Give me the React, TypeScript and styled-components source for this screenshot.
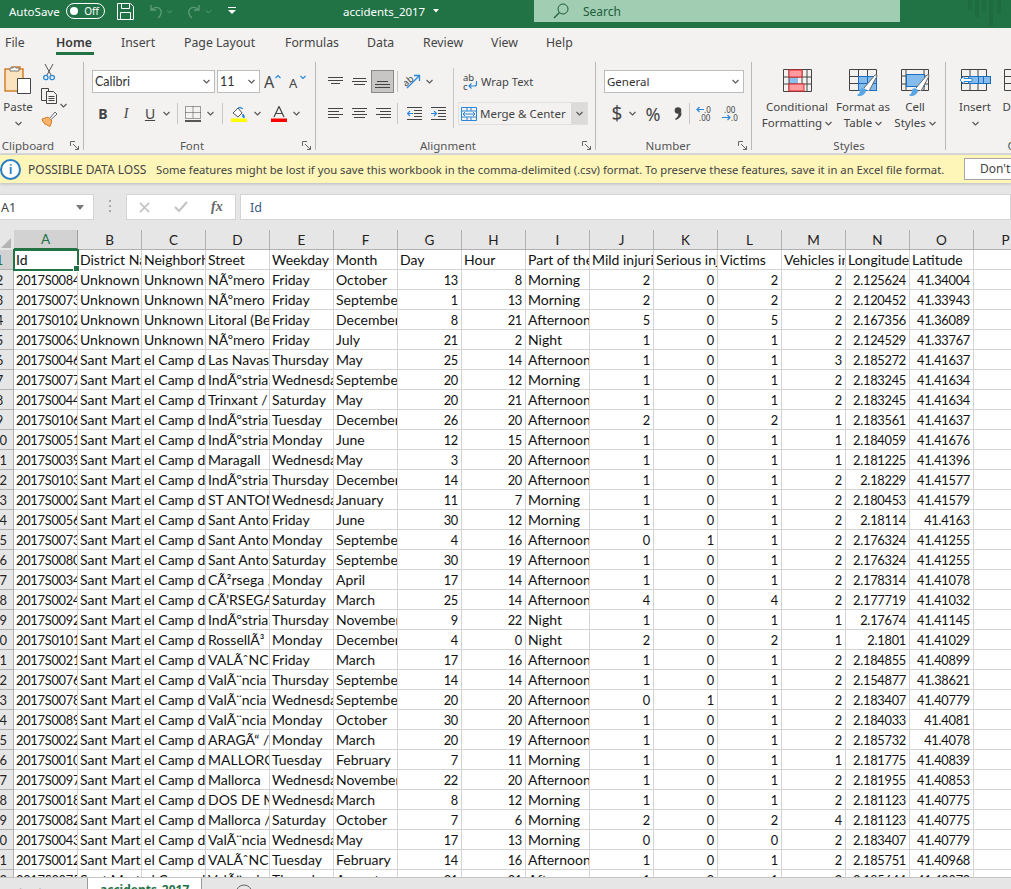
import React from "react";
import styled, { createGlobalStyle } from "styled-components";

const Global = createGlobalStyle`
  html, body { margin: 0; padding: 0; background: #fff; }
  #root { width: 1011px; height: 889px; overflow: hidden; }
`;

const UI = `"Noto Sans", "Open Sans", sans-serif`;
const CELL = `Lato, "Liberation Sans", sans-serif`;

const Page = styled.div`
  width: 1011px; height: 889px; overflow: hidden; display: flex; flex-direction: column;
  font-family: ${UI}; font-size: 12px; color: #444; background: #f3f2f1;
`;
const TitleBar = styled.div`
  height: 28px; flex: none; display: flex; align-items: flex-start; background: #217346; color: #fff;
`;
const TitleItem = styled.div<{ $w: number; $pl?: number; $gap?: number }>`
  width: ${p => p.$w}px; height: 22px; flex: none; display: flex; align-items: center; white-space: nowrap; box-sizing: border-box;
  padding-left: ${p => p.$pl || 0}px; gap: ${p => p.$gap || 0}px; font-size: 11.5px; color: #fff;
`;
const Toggle = styled.div`
  width: 29px; height: 14px; border: 1px solid #fff; border-radius: 8px; display: flex; align-items: center;
  padding: 0 5px 0 3px; box-sizing: content-box; justify-content: space-between; font-size: 10px;
`;
const Knob = styled.span` width: 8px; height: 8px; border-radius: 50%; background: #fff; `;
const SearchBox = styled.div`
  width: 366px; height: 22px; flex: none; background: #a1cdb3; color: #1d5d3a; display: flex; align-items: center; gap: 14px;
  padding-left: 19px; box-sizing: border-box; font-size: 12px;
`;
const Stripes = styled.svg` margin-left: 68px; flex: none; `;

const TabsRow = styled.div` height: 28px; flex: none; display: flex; padding-left: 5px; background: #f3f2f1; `;
const Tab = styled.div<{ $w: number; $active?: boolean }>`
  width: ${p => p.$w}px; flex: none; display: flex; align-items: flex-start; padding-top: 6px; box-sizing: border-box;
  font-size: 12.3px; line-height: 17px; color: #444; position: relative; white-space: nowrap;
  font-weight: ${p => (p.$active ? 600 : 400)};
  ${p => p.$active ? `color: #3b3a39; &::after { content: ""; position: absolute; left: 0; top: 24px; width: 38px; height: 3px; background: #217346; }` : ""}
`;

const Ribbon = styled.div`
  height: 97px; flex: none; display: flex; background: #f3f2f1; border-bottom: 2px solid #d9d9d9; box-sizing: content-box; overflow: hidden;
`;
const Group = styled.div<{ $w: number; $line?: boolean }>`
  width: ${p => p.$w}px; flex: none; position: relative; display: flex; flex-direction: column; box-sizing: border-box;
  ${p => p.$line ? `&::after { content: ""; position: absolute; right: 0; top: 6px; bottom: 3px; width: 1px; background: #b9b9b9; }` : ""}
`;
const GroupBody = styled.div` height: 82px; flex: none; display: flex; `;
const GroupLabel = styled.div<{ $pad?: number }>`
  height: 14px; display: flex; align-items: center; justify-content: center; position: relative; font-size: 11.5px; color: #555;
  padding-right: ${p => p.$pad || 0}px; white-space: nowrap;
`;
const Launcher = styled.svg` position: absolute; right: 4px; top: 3px; `;
const Col = styled.div<{ $ml?: number }>` display: flex; flex-direction: column; gap: 9px; padding-top: 14px; margin-left: ${p => p.$ml || 0}px; `;
const Row = styled.div<{ $pl?: number }>` display: flex; align-items: center; height: 23px; padding-left: ${p => p.$pl || 0}px; `;
const Slot = styled.div<{ $w: number; $ml?: number; $active?: boolean }>`
  width: ${p => p.$w}px; height: 23px; flex: none; margin-left: ${p => p.$ml || 0}px; display: flex; align-items: center; justify-content: center;
  color: #444; box-sizing: border-box;
  ${p => p.$active ? `background: #c8c6c4; border: 1px solid #8a8886;` : ""}
`;
const Letter = styled.span<{ $bold?: boolean; $italic?: boolean; $under?: boolean }>`
  font-size: 14px; line-height: 1; color: #444;
  font-family: ${p => (p.$italic ? `"Liberation Serif", serif` : UI)};
  font-weight: ${p => (p.$bold ? 700 : 400)}; font-style: ${p => (p.$italic ? "italic" : "normal")};
  text-decoration: ${p => (p.$under ? "underline" : "none")};
`;
const Symbol = styled.span<{ $size: number }>` font-size: ${p => p.$size}px; color: #444; line-height: 1; `;
const Sep = styled.div<{ $ml?: number; $mt?: number; $h?: number }>`
  width: 1px; height: ${p => p.$h || 21}px; background: #c8c6c4; flex: none; margin-left: ${p => p.$ml || 0}px; margin-top: ${p => p.$mt || 0}px;
`;
const Combo = styled.div<{ $w: number; $ml?: number }>`
  width: ${p => p.$w}px; height: 23px; flex: none; margin-left: ${p => p.$ml || 0}px; background: #fff; border: 1px solid #bdbdbd; box-sizing: border-box;
  display: flex; align-items: center; justify-content: space-between; padding: 0 4px 0 2px; font-size: 11.5px; color: #333;
`;
const ComboCalibri = styled(Combo)` font-family: ${CELL}; font-size: 12.5px; `;
const WrapText = styled.div`
  display: flex; align-items: center; height: 23px; margin-left: 5px; gap: 3px; font-size: 11.2px; color: #444; white-space: nowrap;
`;
const Merge = styled.div`
  width: 130px; height: 23px; display: flex; align-items: center; background: #f3f2f1; border: 1px solid #e1dfdd; box-sizing: border-box; font-size: 11.5px; color: #444; white-space: nowrap; gap: 3px; padding-left: 2px;
`;
const MergeDrop = styled.div`
  margin-left: auto; width: 16px; height: 21px; display: flex; align-items: center; justify-content: center; background: #dcdbda;
`;
const Big = styled.div<{ $w: number; $ml?: number; $pt?: number }>`
  width: ${p => p.$w}px; flex: none; margin-left: ${p => p.$ml || 0}px; display: flex; flex-direction: column; align-items: center;
  padding-top: ${p => p.$pt ?? 13}px; font-size: 11.5px; line-height: 16px; color: #444; white-space: nowrap; text-align: center;
`;
const BigIcon = styled.div<{ $pl?: number }>` height: 30px; display: flex; align-items: flex-start; justify-content: center; padding-left: ${p => p.$pl || 0}px; `;
const BigLine = styled.div<{ $mt?: number }>` height: 16px; display: flex; align-items: center; gap: 3px; margin-top: ${p => p.$mt || 0}px; `;
const SmallCol = styled.div<{ $ml?: number }>` display: flex; flex-direction: column; align-items: center; width: 20px; padding-top: 8px; gap: 7px; margin-left: ${p => p.$ml || 0}px; `;
const SmallChev = styled.div` width: 7px; padding-top: 39px; margin-left: 1px; `;

const MsgBar = styled.div`
  height: 28px; flex: none; display: flex; align-items: center; background: #fdf6b8; box-shadow: 0 1px 3px rgba(0,0,0,.2); position: relative; white-space: nowrap;
  color: #444; overflow: hidden;
`;
const MsgIcon = styled.div`
  width: 17px; height: 17px; border: 2px solid #2a7cc4; border-radius: 50%; background: #fff; color: #2a7cc4; display: flex; align-items: center; justify-content: center;
  font-size: 13px; font-weight: 600; flex: none;
`;
const MsgTitle = styled.span` margin-left: 7px; width: 128px; flex: none; font-size: 12px; `;
const MsgText = styled.span` width: 808px; flex: none; font-size: 11.25px; `;
const MsgButton = styled.div`
  width: 60px; height: 22px; flex: none; background: #fff; border: 1px solid #a6a6a6; box-sizing: border-box; padding-left: 15px; line-height: 20px; font-size: 12px;
`;

const FormulaBar = styled.div`
  height: 47px; flex: none; background: #e6e6e6; display: flex; align-items: flex-start; padding-top: 11px; box-sizing: border-box;
`;
const NameBox = styled.div`
  width: 95px; height: 26px; flex: none; background: #fff; border: 1px solid #d4d4d4; box-sizing: border-box; margin-left: -1px;
  display: flex; align-items: center; justify-content: space-between; padding: 0 9px 0 1px; font-size: 12.5px; color: #444;
`;
const Grip = styled.svg` margin-left: 15px; margin-right: 14px; margin-top: 5px; flex: none; `;
const FxBox = styled.div`
  width: 110px; height: 26px; flex: none; background: #fff; border: 1px solid #d4d4d4; box-sizing: border-box; display: flex; align-items: center;
  padding-left: 12px; gap: 24px;
`;
const FxGlyph = styled.span` font-family: "Liberation Serif", serif; font-style: italic; font-weight: 700; font-size: 14px; color: #666; margin-left: -1px; `;
const FormulaInput = styled.div`
  flex: 1; height: 26px; margin-left: 4px; background: #fff; border: 1px solid #d4d4d4; box-sizing: border-box; display: flex; align-items: center; padding-left: 9px;
  font-size: 12.5px; color: #3c5a8a;
`;

const Sheet = styled.div` flex: 1; min-height: 0; overflow: hidden; background: #fff; position: relative; `;
const HeadRow = styled.div` height: 20px; display: flex; background: #e6e6e6; margin-left: -14px; `;
const Corner = styled.div`
  width: 28px; height: 20px; flex: none; display: flex; justify-content: flex-end; align-items: flex-end; padding: 0 3px 2px 0; box-sizing: border-box; background: #e6e6e6;
`;
const ColHead = styled.div<{ $on?: boolean }>`
  width: 64px; height: 20px; flex: none; box-sizing: border-box; border-right: 1px solid ${p => (p.$on ? "#9f9f9f" : "#b1b1b1")};
  display: flex; align-items: center; justify-content: center; font-family: ${CELL}; font-size: 13.5px;
  background: ${p => (p.$on ? "#d2d2d2" : "#e6e6e6")}; color: ${p => (p.$on ? "#217346" : "#222")};
  border-bottom: ${p => (p.$on ? "2px solid #217346" : "1px solid #b1b1b1")};
`;
const DataRow = styled.div` height: 20px; display: flex; margin-left: -14px; `;
const RowHead = styled.div<{ $on?: boolean }>`
  width: 28px; height: 20px; flex: none; box-sizing: border-box; background: ${p => (p.$on ? "#d2d2d2" : "#e6e6e6")};
  color: ${p => (p.$on ? "#217346" : "#222")}; border-bottom: 1px solid #b1b1b1; border-right: 1px solid #b1b1b1;
  display: flex; align-items: center; justify-content: center; font-family: ${CELL}; font-size: 12.9px;
`;
const Cell = styled.div<{ $num?: boolean; $digits?: boolean }>`
  width: 64px; height: 20px; flex: none; box-sizing: border-box; border-right: 1px solid #d4d4d4; border-bottom: 1px solid #d4d4d4;
  font-family: ${CELL}; font-size: ${p => (p.$digits ? 12.8 : 14)}px; letter-spacing: ${p => (p.$digits ? -0.25 : 0)}px; line-height: 20px; color: #111; white-space: nowrap; overflow: hidden;
  padding: 0 ${p => (p.$num ? 3 : 0)}px 0 ${p => (p.$num ? 0 : 2)}px; text-align: ${p => (p.$num ? "right" : "left")};
`;
const Selection = styled.div`
  position: absolute; left: 13px; top: 19px; width: 66px; height: 22px; border: 2px solid #217346; box-sizing: border-box; pointer-events: none;
  &::after { content: ""; position: absolute; right: -3px; bottom: -3px; width: 5px; height: 5px; background: #217346; border: 1px solid #fff; box-sizing: content-box; }
`;
const SheetTabs = styled.div` height: 12px; flex: none; display: flex; background: #e6e6e6; overflow: hidden; border-top: 1px solid #c4c4c4; box-sizing: border-box; `;
const Nav = styled.div` width: 88px; flex: none; display: flex; padding: 5px 0 0 18px; gap: 17px; color: #aaa; font-size: 12px; line-height: 14px; border-right: 1px solid #9a9a9a; box-sizing: border-box; `;
const SheetTab = styled.div`
  width: 114px; flex: none; background: #fff; color: #217346; font-weight: 700; font-size: 12px; line-height: 15px; padding: 5px 0 0 12px; box-sizing: border-box; margin-top: -1px; border-right: 1px solid #9a9a9a; white-space: nowrap;
`;
const AddSheet = styled.svg` margin-left: 33px; margin-top: 6px; flex: none; `;

const Chev = ({ c = "#555" }: { c?: string }) => (
  <svg width="7" height="5" viewBox="0 0 7 5"><path d="M.5 1 3.500 4 6.500 1" fill="none" stroke={c} strokeWidth="1.1" /></svg>
);
const Launch = () => (
  <Launcher width="10" height="10" viewBox="0 0 10 10" fill="none" stroke="#666">
    <path d="M.5 5V.5H5M3 3l5.500 5.500M5 8.500h3.500V5" />
  </Launcher>
);
const lines = (ys: [number, number, number][], w = 15) => (
  <svg width={w} height="14" viewBox={`0 0 ${w} 14`} stroke="#444">{ys.map(([y, a, b], i) => <path key={i} d={`M${a} ${y + .5}H${b}`} />)}</svg>
);

const PasteIcon = () => (
  <svg width="28" height="30" viewBox="0 0 28 30">
    <path d="M1 4h7v-2h8v2h3v22H1z" fill="#fbe3c0" stroke="#d4812a" strokeWidth="1.5" />
    <path d="M6 5V3h3q1-3 3 0h3v3H6z" fill="#fff" stroke="#777" />
    <path d="M13.500 13.500h13v15h-13z" fill="#fff" stroke="#444" />
  </svg>
);
const CutIcon = () => (
  <svg width="12" height="17" viewBox="0 0 12 17" fill="none">
    <path d="M2 0l6 11M10 0L4 11" stroke="#555" />
    <circle cx="2.800" cy="13.500" r="2.200" stroke="#2b88d8" strokeWidth="1.300" /><circle cx="9.200" cy="13.500" r="2.200" stroke="#2b88d8" strokeWidth="1.300" />
  </svg>
);
const CopyIcon = () => (
  <svg width="17" height="16" viewBox="0 0 17 16" fill="#f3f2f1" stroke="#444">
    <path d="M.5.500h7v12h-7z" /><path d="M5.500 3.500h7l3 3v9h-10z" /><path d="M7.500 8.500h6M7.500 10.500h6M7.500 12.500h6" />
  </svg>
);
const PainterIcon = () => (
  <svg width="17" height="16" viewBox="0 0 17 16">
    <path d="M1 8l6-2 4 4-2 5.500-3-1.500-1-1-1 .5-1-2-1-.5z" fill="#f8b26a" stroke="#d4812a" />
    <path d="M9 7l5-6 2 2-6 5.500" fill="#fff" stroke="#666" />
  </svg>
);
const GrowA = ({ up }: { up: boolean }) => (
  <svg width="18" height="16" viewBox="0 0 18 16">
    <text x="0" y="14" fontFamily="Noto Sans, sans-serif" fontSize={up ? 16 : 13} fill="#444">A</text>
    <path d={up ? "M11.500 4 14 1.500 16.500 4" : "M11.500 2 14 4.500 16.500 2"} fill="none" stroke="#2b88d8" strokeWidth="1.200" />
  </svg>
);
const BorderIcon = () => (
  <svg width="16" height="16" viewBox="0 0 16 16" fill="none" stroke="#444" strokeDasharray="1 1">
    <path d="M.5.500h15v12H.5zM8 .5v12M.5 6.500h15" /><path d="M0 15h16" strokeDasharray="none" strokeWidth="1.500" stroke="#222" />
  </svg>
);
const FillIcon = () => (
  <svg width="17" height="16" viewBox="0 0 17 16">
    <path d="M2 7l5-5 4 5-4 4z" fill="#fff" stroke="#555" /><path d="M12 8q2 2 1 4-2 0-1-4M7 2q2-2 5 1" fill="#2b88d8" stroke="#2b88d8" />
    <rect x="0" y="12.500" width="16" height="3.500" fill="#ffff00" />
  </svg>
);
const FontColor = () => (
  <svg width="16" height="16" viewBox="0 0 16 16">
    <path d="M3 11 8 .5 13 11M5 7.500h6" fill="none" stroke="#444" strokeWidth="1.200" /><rect y="12.500" width="16" height="3.500" fill="#ff0000" />
  </svg>
);
const Orient = () => (
  <svg width="18" height="17" viewBox="0 0 18 17">
    <text x="0" y="11" fontFamily="Noto Sans, sans-serif" fontSize="9.500" fill="#444" transform="rotate(-40 5 10)">ab</text>
    <path d="M3 15 15 3M10 2.500h5.500V8" fill="none" stroke="#2b88d8" strokeWidth="1.300" />
  </svg>
);
const WrapIcon = () => (
  <svg width="15" height="17" viewBox="0 0 15 17">
    <text x="0" y="8" fontFamily="Noto Sans, sans-serif" fontSize="9.500" fill="#444">ab</text>
    <text x="0" y="16.500" fontFamily="Noto Sans, sans-serif" fontSize="9.500" fill="#444">c</text>
    <path d="M13.500 8v3q0 2-2 2H6M8.500 10.500 6 13l2.500 2.500" fill="none" stroke="#2b88d8" strokeWidth="1.200" />
  </svg>
);
const MergeIcon = () => (
  <svg width="16" height="16" viewBox="0 0 16 16" fill="none">
    <path d="M.5 1.500h15v13H.5zM.5 5h15M.5 11h15M6 1.500V5M10 1.500V5M6 11v3.500M10 11v3.500" stroke="#2b88d8" />
    <path d="M2 8h12M4 6l-2 2 2 2M12 6l2 2-2 2" stroke="#2b88d8" />
  </svg>
);
const Indent = ({ out }: { out: boolean }) => (
  <svg width="15" height="14" viewBox="0 0 15 14" stroke="#444">
    <path d="M0 .5h15M7 3.500h8M7 6.500h8M7 9.500h8M0 12.500h15" />
    <path d={out ? "M0 6.500h6M3 4 .5 6.500 3 9" : "M0 6.500h5.500M3 4 5.500 6.500 3 9"} fill="none" stroke="#2b88d8" strokeWidth="1.200" />
  </svg>
);
const Comma = () => (
  <svg width="8" height="13" viewBox="0 0 8 13" fill="#444"><circle cx="4" cy="3.500" r="3.300" /><path d="M4.500 5.500h3Q8 10 2 13l-1-1q3.500-2 3.500-6.500z" /></svg>
);
const DecIcon = ({ inc }: { inc: boolean }) => (
  <svg width="18" height="15" viewBox="0 0 18 15">
    <text x={inc ? 8 : 3} y="6.500" fontFamily="Noto Sans, sans-serif" fontSize="8" fill="#444">{inc ? ".0" : ".00"}</text>
    <text x={inc ? 3 : 10} y="14.500" fontFamily="Noto Sans, sans-serif" fontSize="8" fill="#444">{inc ? ".00" : ".0"}</text>
    <path d={inc ? "M8 3.500H1M3.500 1 1 3.500 3.500 6" : "M1 11.500h8M6.500 9 9 11.500 6.500 14"} fill="none" stroke="#2b88d8" strokeWidth="1.200" />
  </svg>
);
const Brush = () => (
  <g>
    <path d="M15 19 L26 6 q2-1 2 1 L20 22" fill="#fff" stroke="#666" />
    <path d="M9 27q5 0 6-2 3-2 1-5-4-2-5 1 0 4-3 5z" fill="#5aa5e3" />
  </g>
);
const CFIcon = () => (
  <svg width="29" height="23" viewBox="0 0 29 23" fill="none">
    <rect x="6" y="8" width="9" height="7" fill="#8ebfea" />
    <path d="M.5.500h28v22H.5zM.5 8h28M.5 15h28M6 .5v22M19 .5v22M24 .5v22" stroke="#444" />
    <rect x="6" y="1" width="13" height="7" fill="#ff9ca0" stroke="#e8262a" />
    <rect x="6" y="15" width="15" height="7" fill="#ff9ca0" stroke="#e8262a" />
  </svg>
);
const TableIcon = () => (
  <svg width="31" height="28" viewBox="0 0 31 28" fill="none">
    <path d="M.5.500h27v21H.5zM.5 7.500h27M.5 14.500h27M9.500.5v21M18.500.5v21" stroke="#444" />
    <rect x="9.500" y="7.500" width="18" height="14" fill="#85bcec" stroke="#1b6ec2" />
    <path d="M18.500 7.500v14M9.500 14.500h18" stroke="#1b6ec2" />
    <Brush />
  </svg>
);
const CellStyleIcon = () => (
  <svg width="31" height="28" viewBox="0 0 31 28" fill="none">
    <path d="M.5.500h27v21H.5zM.5 7h27M.5 15h27M5 .5v21M23 .5v21" stroke="#444" />
    <rect x="5.500" y="5.500" width="18" height="12" fill="#85bcec" stroke="#1b6ec2" />
    <Brush />
  </svg>
);
const InsertIcon = () => (
  <svg width="32" height="22" viewBox="0 0 32 22" fill="none">
    <path d="M2.500.5h25v21h-25zM2.500 7.500h25M2.500 14.500h25M11 .5v21M19 .5v21" stroke="#444" />
    <rect x="9.500" y="7.500" width="22" height="7" fill="#85bcec" stroke="#1b6ec2" />
    <path d="M19.500 7.500v7M24.500 7.500v7" stroke="#1b6ec2" />
    <path d="M5 7l-4 4 4 4v-2.500h8v-3H5z" fill="#fff" stroke="#2b88d8" />
  </svg>
);
const DeleteIcon = () => (
  <svg width="32" height="22" viewBox="0 0 32 22" fill="none">
    <path d="M.5.500h25v21H.5zM.5 7.500h25M.5 14.500h25M9 .5v21M17 .5v21" stroke="#444" />
    <rect x="9" y="7.500" width="22" height="7" fill="#85bcec" stroke="#1b6ec2" />
  </svg>
);

const columns = ["A", "B", "C", "D", "E", "F", "G", "H", "I", "J", "K", "L", "M", "N", "O", "P"];
const header = ["Id", "District Name", "Neighborhood Name", "Street", "Weekday", "Month", "Day", "Hour", "Part of the day", "Mild injuries", "Serious injuries", "Victims", "Vehicles involved", "Longitude", "Latitude", ""];
const U = "Unknown", S = "Sant MartÃ­", C = "el Camp de l'Arpa del Clot";
const IND = "IndÃºstria", VAL = "ValÃ¨ncia", VALU = "VALÃˆNCIA", NUM = "NÃºmero", ANT = "Sant Antoni Maria Claret";
const Mon = "Monday", Tue = "Tuesday", Wed = "Wednesday", Thu = "Thursday", Fri = "Friday", Sat = "Saturday";
const Sep9 = "September", Dec = "December", Nov = "November", Feb = "February", Mar = "March";
const A = "Afternoon", M = "Morning", N = "Night";
type R = [string, string, string, string, string, string, number, number, string, number, number, number, number, string, string];
const rows: R[] = [
  ["2017S0084", U, U, NUM, Fri, "October", 13, 8, M, 2, 0, 2, 2, "2.125624", "41.34004"],
  ["2017S0073", U, U, NUM, Fri, Sep9, 1, 13, M, 2, 0, 2, 2, "2.120452", "41.33943"],
  ["2017S0102", U, U, "Litoral (BesÃ²s)", Fri, Dec, 8, 21, A, 5, 0, 5, 2, "2.167356", "41.36089"],
  ["2017S0063", U, U, NUM, Fri, "July", 21, 2, N, 1, 0, 1, 2, "2.124529", "41.33767"],
  ["2017S0046", S, C, "Las Navas de Tolosa", Thu, "May", 25, 14, A, 1, 0, 1, 3, "2.185272", "41.41637"],
  ["2017S0077", S, C, IND, Wed, Sep9, 20, 12, M, 1, 0, 1, 2, "2.183245", "41.41634"],
  ["2017S0044", S, C, "Trinxant / IndÃºstria", Sat, "May", 20, 21, A, 1, 0, 1, 2, "2.183245", "41.41634"],
  ["2017S0106", S, C, IND, Tue, Dec, 26, 20, A, 2, 0, 2, 1, "2.183561", "41.41637"],
  ["2017S0051", S, C, IND, Mon, "June", 12, 15, A, 1, 0, 1, 1, "2.184059", "41.41676"],
  ["2017S0039", S, C, "Maragall", Wed, "May", 3, 20, A, 1, 0, 1, 1, "2.181225", "41.41396"],
  ["2017S0103", S, C, IND, Thu, Dec, 14, 20, A, 1, 0, 1, 2, "2.18229", "41.41577"],
  ["2017S0002", S, C, "ST ANTONI", Wed, "January", 11, 7, M, 1, 0, 1, 2, "2.180453", "41.41579"],
  ["2017S0056", S, C, ANT, Fri, "June", 30, 12, M, 1, 0, 1, 2, "2.18114", "41.4163"],
  ["2017S0073", S, C, ANT, Mon, Sep9, 4, 16, A, 0, 1, 1, 2, "2.176324", "41.41255"],
  ["2017S0080", S, C, ANT, Sat, Sep9, 30, 19, A, 1, 0, 1, 2, "2.176324", "41.41255"],
  ["2017S0034", S, C, "CÃ²rsega / Cartagena", Mon, "April", 17, 14, A, 1, 0, 1, 2, "2.178314", "41.41078"],
  ["2017S0024", S, C, "CÃ’RSEGA", Sat, Mar, 25, 14, A, 4, 0, 4, 2, "2.177719", "41.41032"],
  ["2017S0092", S, C, IND, Thu, Nov, 9, 22, N, 1, 0, 1, 1, "2.17674", "41.41145"],
  ["2017S0101", S, C, "RossellÃ³", Mon, Dec, 4, 0, N, 2, 0, 2, 1, "2.1801", "41.41029"],
  ["2017S0021", S, C, VALU, Fri, Mar, 17, 16, A, 1, 0, 1, 2, "2.184855", "41.40899"],
  ["2017S0076", S, C, VAL, Thu, Sep9, 14, 14, A, 1, 0, 1, 2, "2.154877", "41.38621"],
  ["2017S0078", S, C, VAL, Wed, Sep9, 20, 20, A, 0, 1, 1, 2, "2.183407", "41.40779"],
  ["2017S0089", S, C, VAL, Mon, "October", 30, 20, A, 1, 0, 1, 2, "2.184033", "41.4081"],
  ["2017S0022", S, C, "ARAGÃ“ / Sicilia", Mon, Mar, 20, 19, A, 1, 0, 1, 2, "2.185732", "41.4078"],
  ["2017S0010", S, C, "MALLORCA", Tue, Feb, 7, 11, M, 1, 0, 1, 1, "2.181775", "41.40839"],
  ["2017S0097", S, C, "Mallorca", Wed, Nov, 22, 20, A, 1, 0, 1, 2, "2.181955", "41.40853"],
  ["2017S0018", S, C, "DOS DE MAIG", Wed, Mar, 8, 12, M, 1, 0, 1, 2, "2.181123", "41.40775"],
  ["2017S0082", S, C, "Mallorca / Dos de Maig", Sat, "October", 7, 6, M, 2, 0, 2, 4, "2.181123", "41.40775"],
  ["2017S0043", S, C, VAL, Wed, "May", 17, 13, M, 0, 0, 0, 2, "2.183407", "41.40779"],
  ["2017S0012", S, C, VALU, Tue, Feb, 14, 16, A, 1, 0, 1, 2, "2.185751", "41.40968"],
  ["2017S0075", S, C, VAL, Thu, "August", 31, 21, A, 1, 0, 1, 2, "2.185644", "41.40970"],
];

const tabs: [string, number, boolean?][] = [["File", 51], ["Home", 65, true], ["Insert", 63], ["Page Layout", 101], ["Formulas", 82], ["Data", 56], ["Review", 68], ["View", 55], ["Help", 40]];

export default function App() {
  return (
    <Page>
      <Global />
      <TitleBar>
        <TitleItem $w={66} $pl={9}>AutoSave</TitleItem>
        <TitleItem $w={51}><Toggle><Knob /><span>Off</span></Toggle></TitleItem>
        <TitleItem $w={30}>
          <svg width="17" height="17" viewBox="0 0 17 17" fill="none" stroke="#fff"><path d="M.5.500h13l3 3v13H.5z" /><path d="M4.500.5v5h8v-5M3.500 16.500v-7h10v7" /></svg>
        </TitleItem>
        <TitleItem $w={39}>
          <svg width="26" height="15" viewBox="0 0 26 15" fill="none" stroke="#5d9c79"><path d="M4 1v5h5M4 6q4-4 8-2 4 3 1 8l-2 2" strokeWidth="1.300" /><path d="M20 6.500l2.500 2.500 2.500-2.500" /></svg>
        </TitleItem>
        <TitleItem $w={42}>
          <svg width="26" height="15" viewBox="0 0 26 15" fill="none" stroke="#5d9c79"><path d="M13 1v5H8M13 6q-4-4-8-2-4 3-1 8l2 2" strokeWidth="1.300" /><path d="M20 6.500l2.500 2.500 2.500-2.500" /></svg>
        </TitleItem>
        <TitleItem $w={115}>
          <svg width="8" height="8" viewBox="0 0 8 8" fill="#fff"><path d="M0 0h8v1H0zM0 3h8L4 7z" /></svg>
        </TitleItem>
        <TitleItem $w={191} $gap={8}>accidents_2017
          <svg width="6" height="4" viewBox="0 0 6 4" fill="#fff"><path d="M0 0h6L3 3.500z" /></svg>
        </TitleItem>
        <SearchBox>
          <svg width="16" height="16" viewBox="0 0 16 16" fill="none" stroke="#1d5d3a"><circle cx="10" cy="6" r="5" /><path d="M6.500 9.500 1 15" strokeWidth="1.200" /></svg>
          <span>Search</span>
        </SearchBox>
        <Stripes width="33" height="28" viewBox="0 0 33 28" fill="#1e6a41">
          <rect x="0" width="4" height="10" /><rect x="7" width="4" height="17" /><rect x="14" width="4" height="11" /><rect x="21" width="4" height="26" /><rect x="29" width="4" height="14" />
        </Stripes>
      </TitleBar>

      <TabsRow>
        {tabs.map(([t, w, a]) => <Tab key={t} $w={w} $active={a}>{t}</Tab>)}
      </TabsRow>

      <Ribbon>
        <Group $w={84} $line>
          <GroupBody>
            <Big $w={36} $pt={9}>
              <BigIcon><PasteIcon /></BigIcon>
              <BigLine $mt={4}>Paste</BigLine>
              <BigLine><Chev /></BigLine>
            </Big>
            <SmallCol $ml={3}><CutIcon /><CopyIcon /><PainterIcon /></SmallCol>
            <SmallChev><Chev /></SmallChev>
          </GroupBody>
          <GroupLabel $pad={28}>Clipboard<Launch /></GroupLabel>
        </Group>

        <Group $w={232} $line>
          <GroupBody>
            <Col>
              <Row $pl={8}>
                <ComboCalibri $w={123}>Calibri<Chev /></ComboCalibri>
                <ComboCalibri $w={43} $ml={2}>11<Chev /></ComboCalibri>
                <Slot $w={25}><GrowA up /></Slot>
                <Slot $w={25}><GrowA up={false} /></Slot>
              </Row>
              <Row $pl={11}>
                <Slot $w={16}><Letter $bold>B</Letter></Slot>
                <Slot $w={16} $ml={7}><Letter $italic>I</Letter></Slot>
                <Slot $w={16} $ml={8}><Letter $under>U</Letter></Slot>
                <Slot $w={10} $ml={3}><Chev /></Slot>
                <Sep $ml={6} />
                <Slot $w={16} $ml={7}><BorderIcon /></Slot>
                <Slot $w={10} $ml={4}><Chev /></Slot>
                <Sep $ml={7} />
                <Slot $w={17} $ml={8}><FillIcon /></Slot>
                <Slot $w={10} $ml={4}><Chev /></Slot>
                <Slot $w={16} $ml={9}><FontColor /></Slot>
                <Slot $w={10} $ml={4}><Chev /></Slot>
              </Row>
            </Col>
          </GroupBody>
          <GroupLabel $pad={16}>Font<Launch /></GroupLabel>
        </Group>

        <Group $w={280} $line>
          <GroupBody>
            <Col>
              <Row $pl={7}>
                <Slot $w={24}>{lines([[2, 0, 15], [5, 0, 15], [8, 3, 12]])}</Slot>
                <Slot $w={24}>{lines([[3, 1, 14], [6, 0, 15], [9, 2, 13]])}</Slot>
                <Slot $w={23} $active>{lines([[6, 2, 13], [9, 0, 15], [12, 0, 15]])}</Slot>
                <Sep $ml={3} />
                <Slot $w={20} $ml={5}><Orient /></Slot>
                <Slot $w={10} $ml={1}><Chev /></Slot>
              </Row>
              <Row $pl={7}>
                <Slot $w={24}>{lines([[1, 0, 15], [4, 0, 11], [7, 0, 15], [10, 0, 11]])}</Slot>
                <Slot $w={24}>{lines([[1, 0, 15], [4, 2, 13], [7, 0, 15], [10, 2, 13]])}</Slot>
                <Slot $w={24}>{lines([[1, 0, 15], [4, 4, 15], [7, 0, 15], [10, 4, 15]])}</Slot>
                <Sep $ml={2} />
                <Slot $w={15} $ml={9}><Indent out /></Slot>
                <Slot $w={15} $ml={9}><Indent out={false} /></Slot>
              </Row>
            </Col>
            <Sep $ml={7} $h={60} $mt={12} />
            <Col $ml={4}>
              <WrapText><WrapIcon />Wrap Text</WrapText>
              <Merge><MergeIcon />Merge &amp; Center<MergeDrop><Chev /></MergeDrop></Merge>
            </Col>
          </GroupBody>
          <GroupLabel $pad={16}>Alignment<Launch /></GroupLabel>
        </Group>

        <Group $w={156} $line>
          <GroupBody>
            <Col>
              <Row $pl={8}><Combo $w={140}>General<Chev /></Combo></Row>
              <Row $pl={14}>
                <Slot $w={14}><Symbol $size={19}>$</Symbol></Slot>
                <Slot $w={10} $ml={3}><Chev /></Slot>
                <Slot $w={16} $ml={8}><Symbol $size={18}>%</Symbol></Slot>
                <Slot $w={10} $ml={12}><Comma /></Slot>
                <Sep $ml={6} />
                <Slot $w={18} $ml={6}><DecIcon inc /></Slot>
                <Slot $w={18} $ml={7}><DecIcon inc={false} /></Slot>
              </Row>
            </Col>
          </GroupBody>
          <GroupLabel $pad={12}>Number<Launch /></GroupLabel>
        </Group>

        <Group $w={194} $line>
          <GroupBody>
            <Big $w={78} $ml={6}>
              <BigIcon><CFIcon /></BigIcon>
              <BigLine>Conditional</BigLine>
              <BigLine>Formatting <Chev /></BigLine>
            </Big>
            <Big $w={54}>
              <BigIcon $pl={2}><TableIcon /></BigIcon>
              <BigLine>Format as</BigLine>
              <BigLine>Table <Chev /></BigLine>
            </Big>
            <Big $w={50}>
              <BigIcon $pl={2}><CellStyleIcon /></BigIcon>
              <BigLine>Cell</BigLine>
              <BigLine>Styles <Chev /></BigLine>
            </Big>
          </GroupBody>
          <GroupLabel>Styles</GroupLabel>
        </Group>

        <Group $w={148}>
          <GroupBody>
            <Big $w={42} $ml={8}>
              <BigIcon><InsertIcon /></BigIcon>
              <BigLine>Insert</BigLine>
              <BigLine><Chev /></BigLine>
            </Big>
            <Big $w={42} $ml={3}>
              <BigIcon><DeleteIcon /></BigIcon>
              <BigLine>Delete</BigLine>
              <BigLine><Chev /></BigLine>
            </Big>
          </GroupBody>
          <GroupLabel>Cells</GroupLabel>
        </Group>
      </Ribbon>

      <MsgBar>
        <MsgIcon>i</MsgIcon>
        <MsgTitle>POSSIBLE DATA LOSS</MsgTitle>
        <MsgText>Some features might be lost if you save this workbook in the comma-delimited (.csv) format. To preserve these features, save it in an Excel file format.</MsgText>
        <MsgButton>Don't</MsgButton>
      </MsgBar>

      <FormulaBar>
        <NameBox>A1
          <svg width="8" height="5" viewBox="0 0 8 5" fill="#777"><path d="M0 0h8L4 5z" /></svg>
        </NameBox>
        <Grip width="3" height="14" viewBox="0 0 3 14" fill="#aaa"><rect y="1" width="2" height="2" /><rect y="6" width="2" height="2" /><rect y="11" width="2" height="2" /></Grip>
        <FxBox>
          <svg width="11" height="11" viewBox="0 0 12 12" fill="none" stroke="#c4c4c4" strokeWidth="1.800"><path d="M1 1l10 10M11 1 1 11" /></svg>
          <svg width="14" height="12" viewBox="0 0 14 12" fill="none" stroke="#c4c4c4" strokeWidth="2.200"><path d="M1 6l4 4 8-9" /></svg>
          <FxGlyph>fx</FxGlyph>
        </FxBox>
        <FormulaInput>Id</FormulaInput>
      </FormulaBar>

      <Sheet>
        <HeadRow>
          <Corner><svg width="10" height="10" viewBox="0 0 10 10" fill="#b4b4b4"><path d="M10 0v10H0z" /></svg></Corner>
          {columns.map(c => <ColHead key={c} $on={c === "A"}>{c}</ColHead>)}
        </HeadRow>
        <DataRow>
          <RowHead $on>1</RowHead>
          {header.map((h, i) => <Cell key={i}>{h}</Cell>)}
        </DataRow>
        {rows.map((r, i) => (
          <DataRow key={i}>
            <RowHead>{i + 2}</RowHead>
            {r.map((v, j) => {
              const num = j >= 6 && j !== 8;
              return <Cell key={j} $num={num} $digits={num || j === 0}>{v}</Cell>;
            })}
            <Cell />
          </DataRow>
        ))}
        <Selection />
      </Sheet>

      <SheetTabs>
        <Nav><span>‹</span><span>›</span></Nav>
        <SheetTab>accidents_2017</SheetTab>
        <AddSheet width="18" height="18" viewBox="0 0 18 18" fill="none" stroke="#666"><circle cx="9" cy="9" r="8" /><path d="M9 5v8M5 9h8" /></AddSheet>
      </SheetTabs>
    </Page>
  );
}
